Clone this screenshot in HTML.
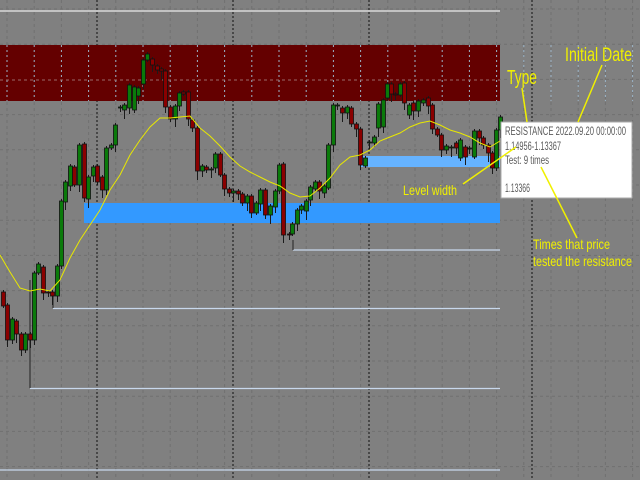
<!DOCTYPE html>
<html><head><meta charset="utf-8"><style>
html,body{margin:0;padding:0;background:#808080;}
svg{display:block;}
text{font-family:"Liberation Sans",sans-serif;}
</style></head><body>
<svg id="s" width="640" height="480" xmlns="http://www.w3.org/2000/svg">
<rect width="640" height="480" fill="#808080"/>
<g id="grid"></g>
<rect x="0" y="45" width="500" height="56" fill="#640000"/>
<g id="grid2"></g>
<line x1="0" y1="11" x2="500" y2="11" stroke="#d8d8d8" stroke-width="1.5"/>
<rect x="84" y="203" width="416" height="20" fill="#3399ff"/>
<rect x="360" y="156" width="140" height="11" fill="#66b3ff"/>
<line x1="293" y1="250" x2="500" y2="250" stroke="#c8d8ec" stroke-width="1.2"/>
<line x1="53" y1="308.5" x2="500" y2="308.5" stroke="#c8d8ec" stroke-width="1.2"/>
<line x1="30" y1="388.5" x2="500" y2="388.5" stroke="#c8d8ec" stroke-width="1.2"/>
<line x1="0" y1="470" x2="500" y2="470" stroke="#c8d8ec" stroke-width="1.2"/>
<line x1="30" y1="280" x2="30" y2="388" stroke="#222" stroke-width="1"/>
<line x1="53" y1="296" x2="53" y2="308" stroke="#222" stroke-width="1"/>
<line x1="293" y1="240" x2="293" y2="250" stroke="#222" stroke-width="1"/>
<g id="candles"></g>
<polyline fill="none" stroke="#e8e800" stroke-width="1" points="0,255 10,272 20,288 30,291 40,289 50,291 60,280 70,258 80,240 90,225 100,210 110,190 120,175 130,155 140,140 150,127 160,118 170,118 180,117 190,116 200,128 210,136 220,146 230,157 240,166 250,172 260,177 270,182 280,186 290,193 300,197 310,196 320,188 330,178 340,165 350,157 360,155 370,150 380,141 390,137 400,133 410,127 420,123 430,121 440,125 450,130 460,133 470,137 480,143 490,147 500,141"/>
<rect x="501" y="122" width="131" height="76" fill="#fff" stroke="#aaa"/>
<g fill="#5a5a5a" font-size="11.5">
<text x="505" y="135" textLength="121" lengthAdjust="spacingAndGlyphs">RESISTANCE 2022.09.20 00:00:00</text>
<text x="505" y="150" textLength="56" lengthAdjust="spacingAndGlyphs">1.14956-1.13367</text>
<text x="505" y="164" textLength="44" lengthAdjust="spacingAndGlyphs">Test: 9 times</text>
<text x="505" y="192" textLength="25" lengthAdjust="spacingAndGlyphs">1.13366</text>
</g>
<g stroke="#f0f000" stroke-width="1.5">
<line x1="602" y1="65" x2="578" y2="122"/>
<line x1="522" y1="88" x2="527" y2="122"/>
<line x1="463" y1="184" x2="516" y2="147"/>
<line x1="541" y1="167" x2="577" y2="238"/>
</g>
<g fill="#f0f000">
<text x="565" y="61" font-size="19" textLength="67" lengthAdjust="spacingAndGlyphs">Initial Date</text>
<text x="507" y="84" font-size="20" textLength="30" lengthAdjust="spacingAndGlyphs">Type</text>
<text x="403" y="195" font-size="14" textLength="54" lengthAdjust="spacingAndGlyphs">Level width</text>
<text x="533" y="249" font-size="14" textLength="77" lengthAdjust="spacingAndGlyphs">Times that price</text>
<text x="533" y="266" font-size="14" textLength="99" lengthAdjust="spacingAndGlyphs">tested the resistance</text>
</g>
</svg>
<script>
var NS="http://www.w3.org/2000/svg";
function el(p,t,a){var e=document.createElementNS(NS,t);for(var k in a)e.setAttribute(k,a[k]);p.appendChild(e);return e;}
var g=document.getElementById('grid'),g2=document.getElementById('grid2');
for(var x=7;x<640;x+=27.2){el(g,'line',{x1:x,y1:0,x2:x,y2:480,stroke:'#707070','stroke-dasharray':'3,3'});el(g2,'line',{x1:x,y1:45,x2:x,y2:101,stroke:'#9bb4c8','stroke-dasharray':'2,3'});}
for(var y=9;y<480;y+=35.2){el(g,'line',{x1:0,y1:y,x2:640,y2:y,stroke:'#707070','stroke-dasharray':'3,3'});}
el(g2,'line',{x1:0,y1:80,x2:500,y2:80,stroke:'#9a6a6a','stroke-dasharray':'3,3'});
[97,233,369,532].forEach(function(x){el(g,'line',{x1:x,y1:0,x2:x,y2:480,stroke:'#111','stroke-dasharray':'2,2'});});
var c=[[3,'r',292,306],[7,'r',305,340],[12,'g',319,340],[16,'r',321,334],[21,'r',334,350],[25,'g',334,350],[30,'r',334,340],[34,'g',273,340],[38,'g',264,273],[43,'r',267,293],[48,'r',292,293],[52,'r',292,296],[57,'g',266,296],[61,'g',201,266],[65,'g',182,202],[70,'g',166,186],[74,'r',167,185],[79,'g',145,185],[84,'r',144,198],[88,'g',177,199],[93,'g',167,176],[97,'r',166,182],[102,'r',177,190],[106,'g',148,190],[111,'g',145,148],[115,'g',125,145],[120,'g',107,108],[124,'g',105,110],[129,'g',85,108],[134,'g',87,110],[138,'g',88,96],[143,'g',60,84],[147,'g',54,60],[152,'r',59,65],[157,'r',66,70],[161,'r',69,71],[165,'r',71,107],[170,'r',107,119],[175,'g',106,119],[179,'g',93,106],[183,'r',92,94],[188,'r',92,119],[192,'r',120,128],[197,'r',128,171],[202,'g',166,171],[206,'r',167,170],[211,'g',169,170],[215,'g',154,168],[220,'r',154,175],[224,'r',175,189],[229,'r',189,193],[233,'g',191,193],[238,'r',191,194],[242,'r',194,203],[247,'g',196,203],[251,'r',196,213],[256,'g',203,213],[260,'g',190,204],[265,'r',190,215],[270,'g',206,215],[275,'g',191,207],[279,'g',165,191],[283,'r',164,235],[289,'r',234,235],[292,'g',224,234],[297,'g',210,224],[301,'g',206,210],[306,'g',201,211],[310,'g',187,200],[315,'g',182,189],[319,'r',182,191],[324,'g',186,193],[328,'g',145,188],[333,'g',105,145],[337,'g',105,106],[342,'r',108,113],[347,'g',107,113],[351,'r',108,124],[356,'r',124,129],[360,'r',129,165],[365,'g',158,166],[369,'g',142,143],[374,'g',137,143],[378,'g',104,128],[383,'g',100,127],[387,'g',84,98],[391,'r',84,94],[395,'r',94,95],[400,'g',84,95],[404,'r',83,103],[409,'g',105,115],[413,'r',103,111],[418,'g',101,111],[423,'g',100,103],[428,'r',98,106],[432,'r',105,129],[437,'r',129,135],[441,'r',135,150],[446,'g',146,150],[451,'g',147,148],[456,'r',143,148],[460,'g',140,158],[465,'r',147,157],[469,'g',148,149],[474,'g',131,157],[479,'r',131,138],[483,'r',138,145],[488,'r',145,153],[492,'r',153,168],[496,'g',130,168],[500,'g',117,130]];
var cg=document.getElementById('candles');
c.forEach(function(d,i){var x=d[0],t=Math.min(d[2],d[3]),b=Math.max(d[2],d[3]);var hi=t-2-(i*7%7),lo=b+2+(i*5%8);
el(cg,'line',{x1:x+0.5,y1:hi,x2:x+0.5,y2:lo,stroke:'#1a1a1a','stroke-width':1});
el(cg,'rect',{x:x-1.5,y:t,width:4,height:Math.max(1,b-t),fill:d[1]=='g'?'#0a7a0a':'#8a0000',stroke:'#111','stroke-width':0.8});});
</script>
</body></html>
